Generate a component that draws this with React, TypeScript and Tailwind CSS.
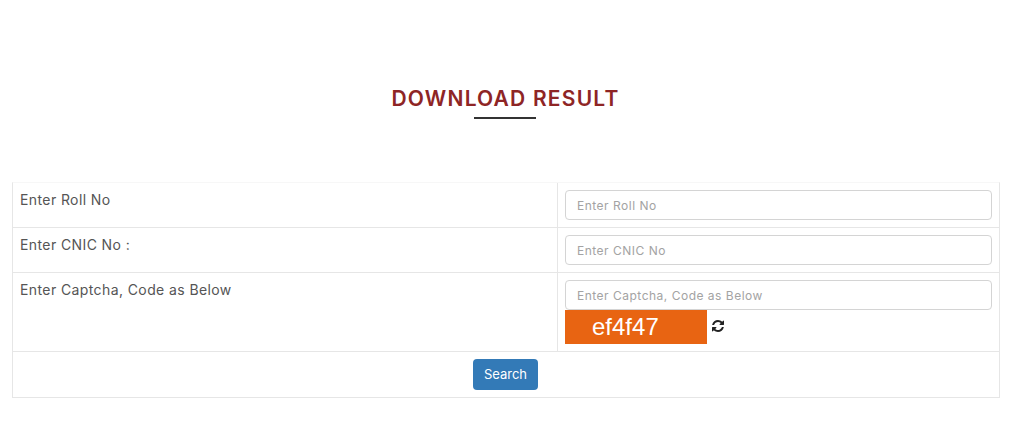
const labelCls = "px-[7px] py-[7px] text-[14px] leading-[20px] tracking-[0.4px] text-[#555555]";
const inputCls = "block w-full h-[30px] rounded-[4px] border border-[#d4d4d4] bg-white px-[11px] text-[12px] tracking-[0.5px] outline-none placeholder:text-[#a3a3a3]";

function Refresh() {
  return (
    <svg width="12" height="12" viewBox="0 0 1536 1536" className="mb-[2px] ml-[5px] fill-[#222222]">
      <path d="M1511 928q0 5-1 7-64 268-268 434.5T764 1536q-146 0-282.500-55T238 1324l-129 129q-19 19-45 19t-45-19-19-45V960q0-26 19-45t45-19h448q26 0 45 19t19 45-19 45l-137 137q71 66 161 102t187 36q134 0 250-65t186-179q11-17 53-117 8-23 30-23h192q13 0 22.500 9.500t9.500 22.500zm25-800v448q0 26-19 45t-45 19h-448q-26 0-45-19t-19-45 19-45l138-138Q969 256 768 256q-134 0-250 65T332 500q-11 17-53 117-8 23-30 23H50q-13 0-22.500-9.500T18 608v-7q65-268 270-434.500T768 0q146 0 284 55.500T1297 212l130-129q19-19 45-19t45 19 19 45z" />
    </svg>
  );
}

export default function App() {
  return (
    <div className="h-[427px] w-[1024px] overflow-hidden bg-white font-['Inter','Noto_Sans',sans-serif]">
      <div className="flex w-[1010px] flex-col items-center pt-[86px]">
        <h2 className="pl-[1px] text-[21px] font-semibold leading-[26px] tracking-[1.2px] text-[#8e2525]">DOWNLOAD RESULT</h2>
        <div className="mt-[5px] h-[2px] w-[62px] bg-[#333333]" />
      </div>
      <div className="ml-[12px] mt-[63px] w-[988px] border border-t-[#f7f7f7] border-x-[#e6e6e6] border-b-[#e6e6e6]">
        <div className="grid h-[45px] grid-cols-[544px_1fr] border-b border-[#e6e6e6]">
          <div className={labelCls}>Enter Roll No</div>
          <div className="border-l border-[#e6e6e6] pl-[7px] pr-[7px] pt-[7px]">
            <input className={inputCls} placeholder="Enter Roll No" />
          </div>
        </div>
        <div className="grid h-[45px] grid-cols-[544px_1fr] border-b border-[#e6e6e6]">
          <div className={labelCls}>Enter CNIC No :</div>
          <div className="border-l border-[#e6e6e6] pl-[7px] pr-[7px] pt-[7px]">
            <input className={inputCls} placeholder="Enter CNIC No" />
          </div>
        </div>
        <div className="grid h-[79px] grid-cols-[544px_1fr] border-b border-[#e6e6e6]">
          <div className={labelCls}>Enter Captcha, Code as Below</div>
          <div className="border-l border-[#e6e6e6] pl-[7px] pr-[7px] pt-[7px]">
            <input className={inputCls} placeholder="Enter Captcha, Code as Below" />
            <div className="flex items-center">
              <div className="h-[34px] w-[142px] bg-[#e86412] pl-[27px] font-['Liberation_Sans',sans-serif] text-[24px] leading-[34px] text-white">ef4f47</div>
              <Refresh />
            </div>
          </div>
        </div>
        <div className="flex h-[45px] items-start justify-center pr-[2px] pt-[7px]">
          <button className="h-[31px] w-[65px] rounded-[4px] bg-[#337ab7] pl-[1px] pt-[1px] text-[13px] text-white">Search</button>
        </div>
      </div>
    </div>
  );
}
